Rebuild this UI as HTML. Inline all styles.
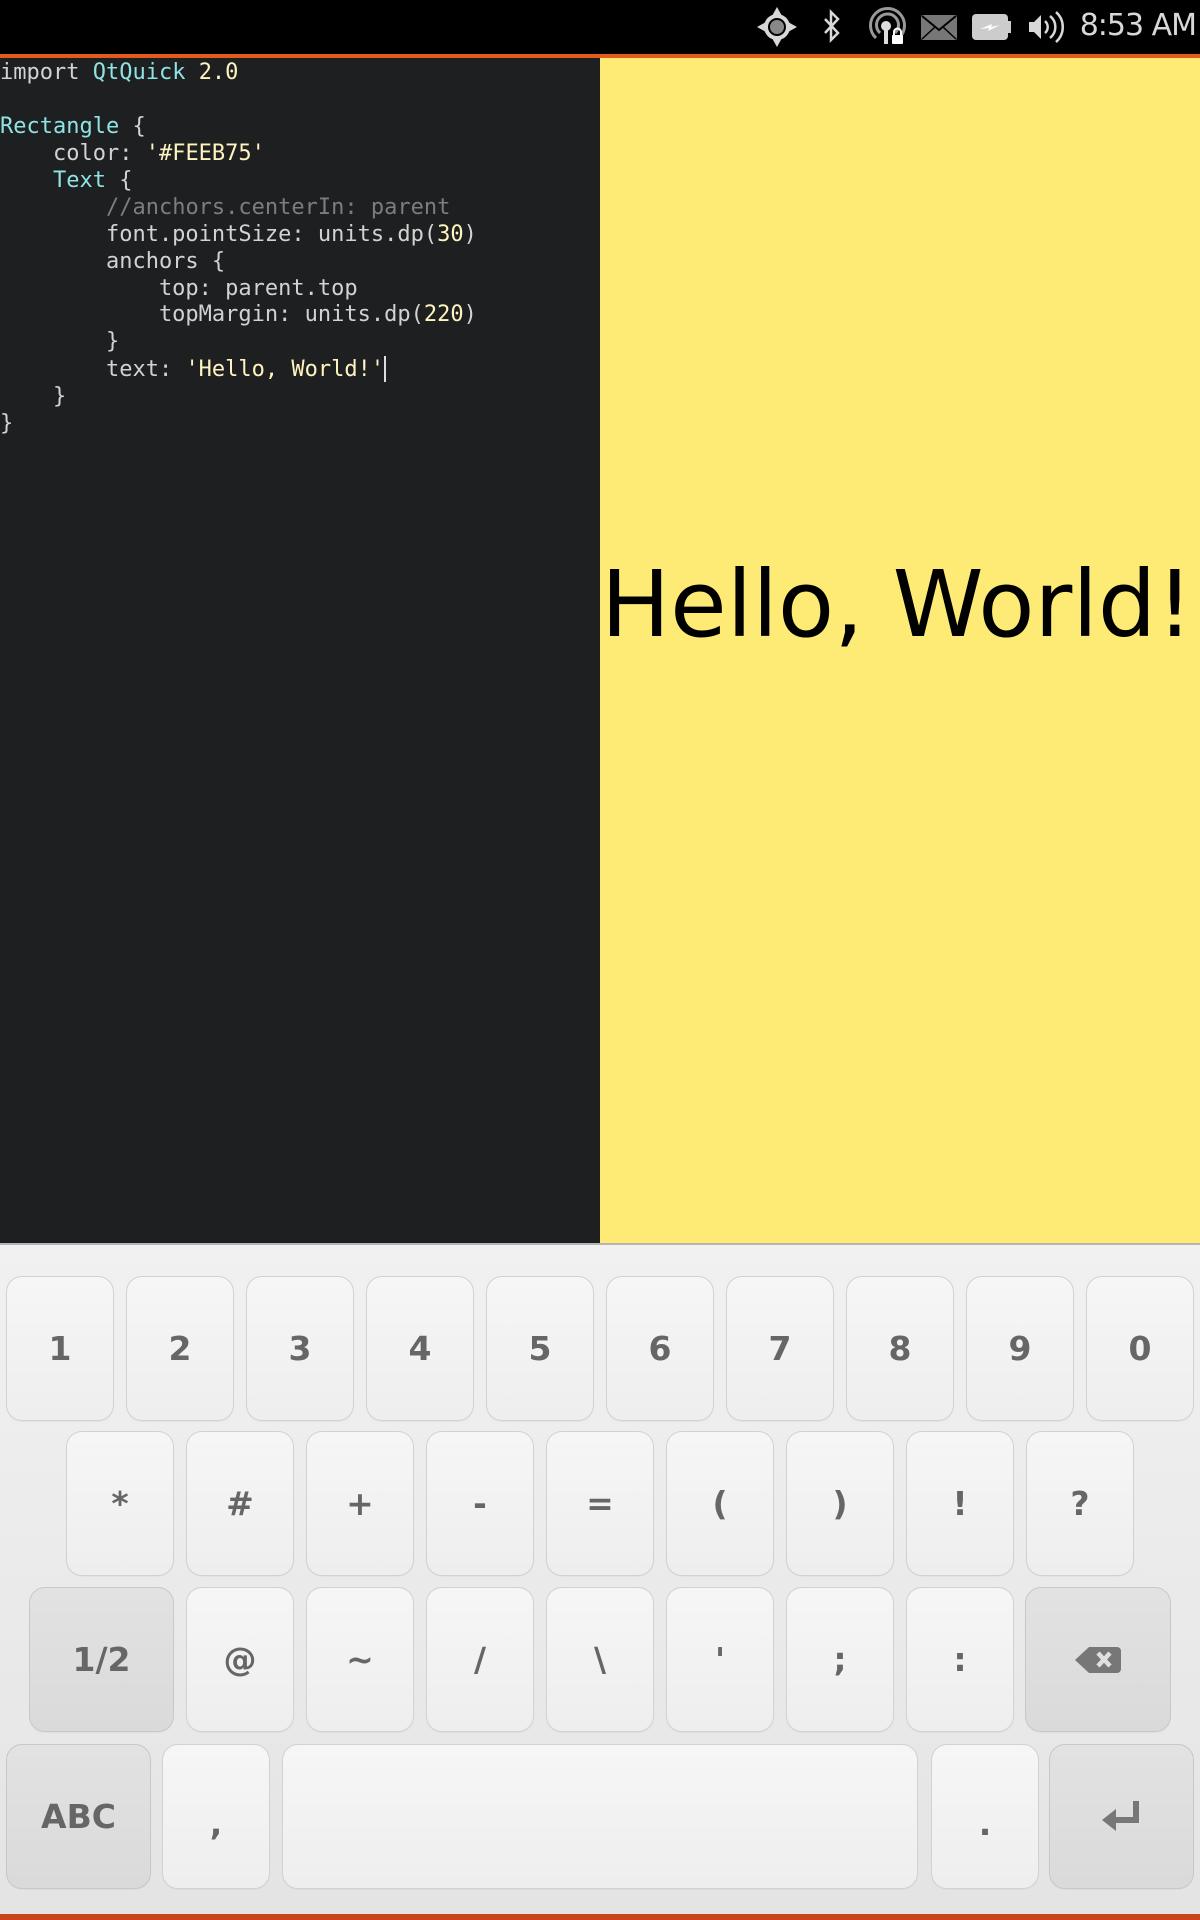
<!DOCTYPE html>
<html><head><meta charset="utf-8"><style>
*{margin:0;padding:0;box-sizing:border-box}
body{width:1200px;height:1920px;overflow:hidden;background:#000;position:relative;font-family:"DejaVu Sans","Liberation Sans",sans-serif}
#status{position:absolute;left:0;top:0;width:1200px;height:54px;background:#000}
#orange{position:absolute;left:0;top:54px;width:1200px;height:4px;background:#e25a1c}
#code{position:absolute;left:0;top:58px;width:600px;height:1185px;background:#1e1f21;overflow:hidden}
#code pre{font-family:"DejaVu Sans Mono","Liberation Mono",monospace;font-size:22px;line-height:26.94px;color:#d2d2d2;padding-top:2px;white-space:pre}
.k{color:#8fe3e3}.s{color:#fff3c0}.c{color:#7d7d7d}
.cur{display:inline-block;width:2px;height:26px;background:#ddd;vertical-align:-6px}
#yellow{position:absolute;left:600px;top:58px;width:600px;height:1185px;background:#feeb75;overflow:hidden}
#hello{position:absolute;left:1px;top:492px;font-size:92px;line-height:110px;color:#000;white-space:nowrap;font-family:"DejaVu Sans",sans-serif}
#kb{position:absolute;left:0;top:1243px;width:1200px;height:671px;background:linear-gradient(#f1f1f1,#e4e4e4);border-top:2px solid #b5b5b5}
.key{position:absolute;width:108px;height:145px;border:1px solid #d2d2d2;border-radius:16px;background:linear-gradient(#f6f6f6,#eeeeee);color:#666;font-weight:bold;font-size:33px;display:flex;align-items:center;justify-content:center;box-shadow:0 1px 1px rgba(0,0,0,0.04)}
.sp{background:linear-gradient(#e2e2e2,#dadada);border-color:#c8c8c8}
#bottom{position:absolute;left:0;top:1914px;width:1200px;height:6px;background:#c8461a}
#time{position:absolute;right:4px;top:8px;color:#d8d8d8;font-size:30px;font-family:"DejaVu Sans",sans-serif;letter-spacing:-1px;white-space:nowrap}
</style></head><body>
<div id="status">
<svg width="1200" height="54" style="position:absolute;left:0;top:0">
 <g fill="#d8d8d8"><circle cx="777" cy="27" r="13"/><polygon points="777,7 772,16 782,16"/><polygon points="777,47 772,38 782,38"/><polygon points="757,27 766,22 766,32"/><polygon points="797,27 788,22 788,32"/></g>
 <circle cx="777" cy="27" r="9" fill="#000"/><circle cx="777" cy="27" r="7" fill="#888"/>
 <path d="M825,19 L838,33 L831,40 L831,12 L838,19 L825,33" stroke="#d8d8d8" stroke-width="2.5" fill="none"/>
 <g fill="none" stroke="#999" stroke-width="3"><path d="M876,38 A17,17 0 1 1 899,38"/><path d="M880,33 A11,11 0 1 1 895,33"/></g>
 <circle cx="886" cy="26" r="5" fill="#ddd"/><rect x="884" y="30" width="4" height="14" fill="#ddd"/>
 <rect x="892" y="35" width="11" height="9" rx="1" fill="#fff"/><path d="M894,35 v-3 a3.5,3.5 0 0 1 7,0 v3" stroke="#fff" stroke-width="2" fill="none"/>
 <rect x="921" y="15" width="36" height="25" rx="2" fill="#777"/><path d="M922,16 L939,30 L956,16" stroke="#000" stroke-width="2" fill="none"/><path d="M922,39 L935,27 M956,39 L943,27" stroke="#000" stroke-width="1.5"/>
 <rect x="972" y="14" width="36" height="26" rx="4" fill="#ccc"/><rect x="1008" y="21" width="3" height="12" fill="#ccc"/>
 <path d="M980,29 L992,24 L991,27 L1000,25 L988,31 L989,28 Z" fill="#fff"/>
 <path d="M1029,22 h5 l7,-7 v24 l-7,-7 h-5 z" fill="#d8d8d8"/>
 <g fill="none" stroke="#d8d8d8" stroke-width="2.5"><path d="M1045,21 a8,8 0 0 1 0,12"/><path d="M1050,16 a14,14 0 0 1 0,22"/><path d="M1056,12 a20,20 0 0 1 0,30"/></g>
</svg>
<div id="time">8:53 AM</div>
</div>
<div id="orange"></div>
<div id="code"><pre>import <span class="k">QtQuick</span> <span class="s">2.0</span>

<span class="k">Rectangle</span> {
    color: <span class="s">'#FEEB75'</span>
    <span class="k">Text</span> {
        <span class="c">//anchors.centerIn: parent</span>
        font.pointSize: units.dp(<span class="s">30</span>)
        anchors {
            top: parent.top
            topMargin: units.dp(<span class="s">220</span>)
        }
        text: <span class="s">'Hello, World!'</span><span class="cur"></span>
    }
}</pre></div>
<div id="yellow"><div id="hello">Hello, World!</div></div>
<div id="kb">
<div class="key" style="left:6px;top:31px">1</div>
<div class="key" style="left:126px;top:31px">2</div>
<div class="key" style="left:246px;top:31px">3</div>
<div class="key" style="left:366px;top:31px">4</div>
<div class="key" style="left:486px;top:31px">5</div>
<div class="key" style="left:606px;top:31px">6</div>
<div class="key" style="left:726px;top:31px">7</div>
<div class="key" style="left:846px;top:31px">8</div>
<div class="key" style="left:966px;top:31px">9</div>
<div class="key" style="left:1086px;top:31px">0</div>
<div class="key" style="left:66px;top:186px">*</div>
<div class="key" style="left:186px;top:186px">#</div>
<div class="key" style="left:306px;top:186px">+</div>
<div class="key" style="left:426px;top:186px">-</div>
<div class="key" style="left:546px;top:186px">=</div>
<div class="key" style="left:666px;top:186px">(</div>
<div class="key" style="left:786px;top:186px">)</div>
<div class="key" style="left:906px;top:186px">!</div>
<div class="key" style="left:1026px;top:186px">?</div>
<div class="key sp" style="left:29px;top:342px;width:145px">1/2</div>
<div class="key" style="left:186px;top:342px">@</div>
<div class="key" style="left:306px;top:342px">~</div>
<div class="key" style="left:426px;top:342px">/</div>
<div class="key" style="left:546px;top:342px">\</div>
<div class="key" style="left:666px;top:342px">'</div>
<div class="key" style="left:786px;top:342px">;</div>
<div class="key" style="left:906px;top:342px">:</div>
<div class="key sp" style="left:1025px;top:342px;width:146px"><svg width="46" height="28" viewBox="0 0 46 28"><path d="M0,14 L14,1 H42 a4,4 0 0 1 4,4 V23 a4,4 0 0 1 -4,4 H14 Z" fill="#777"/><path d="M23,7 L35,20 M35,7 L23,20" stroke="#e0e0e0" stroke-width="4.5"/></svg></div>
<div class="key sp" style="left:6px;top:499px;width:145px">ABC</div>
<div class="key" style="left:162px;top:499px;padding-top:14px">,</div>
<div class="key" style="left:282px;top:499px;width:636px"></div>
<div class="key" style="left:931px;top:499px;padding-top:14px">.</div>
<div class="key sp" style="left:1049px;top:499px;width:145px"><svg width="40" height="32" viewBox="0 0 40 32"><path d="M34,0 V19 H12" stroke="#777" stroke-width="6" fill="none"/><polygon points="0,19 14,8 14,30" fill="#777"/></svg></div>
</div>
<div id="bottom"></div>
</body></html>
